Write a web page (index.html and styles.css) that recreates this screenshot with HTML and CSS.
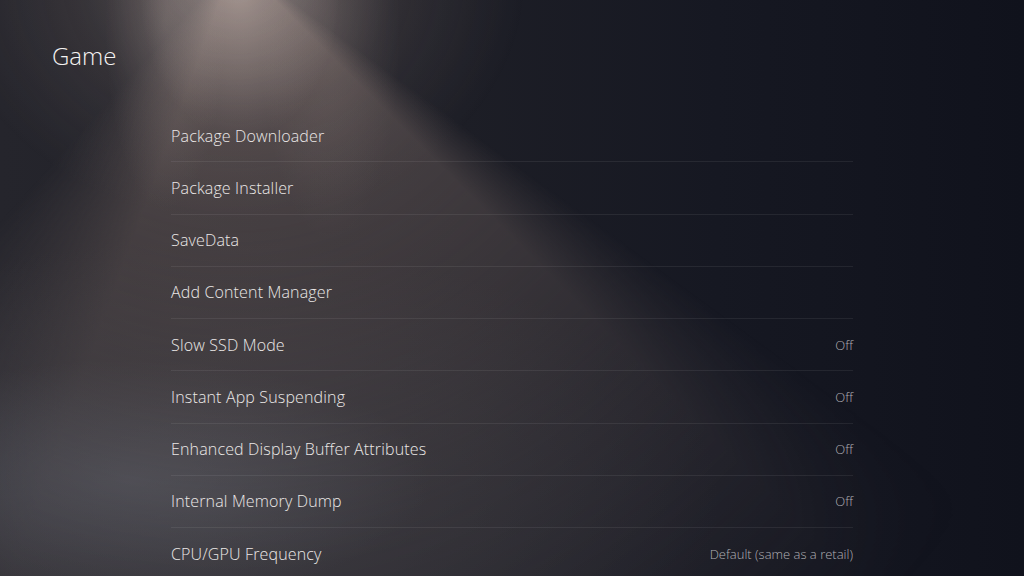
FILE: index.html
```html
<!DOCTYPE html>
<html lang="en">
<head>
<meta charset="utf-8">
<title>Game</title>
<link rel="stylesheet" href="styles.css">
</head>
<body>
<div class="glow" aria-hidden="true"><div class="source"></div></div>
<main class="page">
  <h1 class="title">Game</h1>
  <ul class="menu">
    <li class="row"><span class="label">Package Downloader</span></li>
    <li class="row"><span class="label">Package Installer</span></li>
    <li class="row"><span class="label">SaveData</span></li>
    <li class="row"><span class="label">Add Content Manager</span></li>
    <li class="row"><span class="label">Slow SSD Mode</span><span class="value">Off</span></li>
    <li class="row"><span class="label">Instant App Suspending</span><span class="value">Off</span></li>
    <li class="row"><span class="label">Enhanced Display Buffer Attributes</span><span class="value">Off</span></li>
    <li class="row"><span class="label">Internal Memory Dump</span><span class="value">Off</span></li>
    <li class="row"><span class="label">CPU/GPU Frequency</span><span class="value">Default (same as a retail)</span></li>
  </ul>
</main>
</body>
</html>
```
FILE: styles.css
```css
html, body {
  margin: 0;
  padding: 0;
  width: 1024px;
  height: 576px;
  overflow: hidden;
}

body {
  position: relative;
  font-family: "Open Sans", "Noto Sans", sans-serif;
  color: #e6e3e2;
  background:
    radial-gradient(ellipse 300px 120px at 130px 480px, rgba(100,108,122,0.42) 0, rgba(90,96,110,0) 100%),
    radial-gradient(ellipse 520px 260px at 200px 500px, rgba(62,64,72,0.55) 0, rgba(62,64,72,0) 100%),
    linear-gradient(to right, #25252c 0%, #1d1e26 45%, #161822 70%, #10121c 100%);
}

.glow {
  position: absolute;
  inset: 0;
  pointer-events: none;
  background:
    conic-gradient(from 0deg at 235px -40px,
      rgba(100,88,87,0) 0deg 126deg,
      rgba(100,88,87,0.66) 135deg,
      rgba(104,91,89,0.66) 200deg,
      rgba(100,88,87,0) 222deg 360deg);
  -webkit-mask-image: radial-gradient(circle at 235px -40px, #000 0, rgba(0,0,0,0.8) 260px, rgba(0,0,0,0.4) 560px, rgba(0,0,0,0) 920px);
  mask-image: radial-gradient(circle at 235px -40px, #000 0, rgba(0,0,0,0.8) 260px, rgba(0,0,0,0.4) 560px, rgba(0,0,0,0) 920px);
}

.source {
  position: absolute;
  inset: 0;
  background:
    radial-gradient(ellipse 100px 150px at 240px -10px, rgba(215,198,190,0.45) 0, rgba(215,198,190,0) 100%),
    radial-gradient(ellipse 60px 190px at 165px 20px, rgba(190,172,165,0.24) 0, rgba(190,172,165,0) 100%),
    radial-gradient(ellipse 70px 210px at 330px 30px, rgba(180,160,152,0.2) 0, rgba(180,160,152,0) 100%),
    radial-gradient(ellipse 290px 240px at 235px -20px, rgba(185,165,157,0.45) 0, rgba(150,132,125,0.18) 55%, rgba(150,132,125,0) 100%);
}

.page {
  position: relative;
  padding: 40px 0 0 0;
}

.title {
  margin: 0 0 0 52px;
  font-size: 24px;
  line-height: 32px;
  font-weight: 300;
  color: #f4f2f1;
}

.menu {
  list-style: none;
  margin: 38px 0 0 171px;
  padding: 0;
  width: 682px;
}

.row {
  display: flex;
  align-items: center;
  justify-content: space-between;
  height: 51.25px;
  border-bottom: 1px solid rgba(255,255,255,0.07);
}

.row:last-child {
  border-bottom: none;
}

.label {
  font-size: 16px;
  font-weight: 300;
  color: #ebe8e7;
  letter-spacing: 0.15px;
}

.value {
  font-size: 13px;
  font-weight: 300;
  color: #b0afb4;
}
```
